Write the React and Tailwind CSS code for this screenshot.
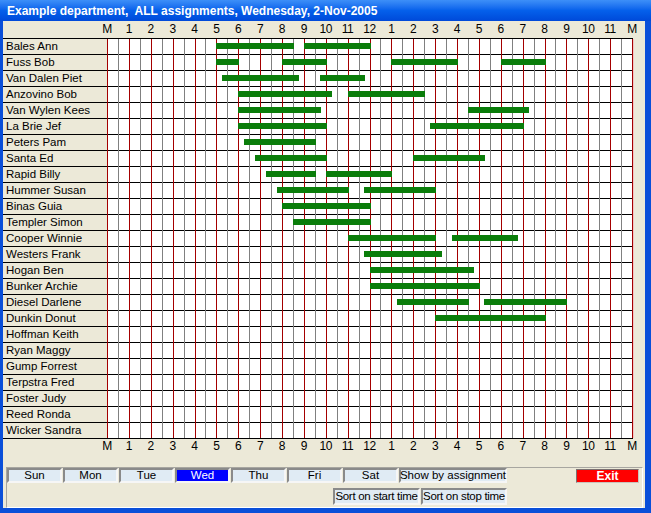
import React from 'react';

const HOUR = 21.875;

const people = [
    ['Bales Ann', [[5, 8.5], [9, 12]]],
    ['Fuss Bob', [[5, 6], [8, 10], [13, 16], [18, 20]]],
    ['Van Dalen Piet', [[5.25, 8.75], [9.75, 11.75]]],
    ['Anzovino Bob', [[6, 10.25], [11, 14.5]]],
    ['Van Wylen Kees', [[6, 9.75], [16.5, 19.25]]],
    ['La Brie Jef', [[6, 10], [14.75, 19]]],
    ['Peters Pam', [[6.25, 9.5]]],
    ['Santa Ed', [[6.75, 10], [14, 17.25]]],
    ['Rapid Billy', [[7.25, 9.5], [10, 13]]],
    ['Hummer Susan', [[7.75, 11], [11.75, 15]]],
    ['Binas Guia', [[8, 12]]],
    ['Templer Simon', [[8.5, 12]]],
    ['Cooper Winnie', [[11, 15], [15.75, 18.75]]],
    ['Westers Frank', [[11.75, 15.25]]],
    ['Hogan Ben', [[12, 16.75]]],
    ['Bunker Archie', [[12, 17]]],
    ['Diesel Darlene', [[13.25, 16.5], [17.25, 21]]],
    ['Dunkin Donut', [[15, 20]]],
    ['Hoffman Keith', []],
    ['Ryan Maggy', []],
    ['Gump Forrest', []],
    ['Terpstra Fred', []],
    ['Foster Judy', []],
    ['Reed Ronda', []],
    ['Wicker Sandra', []]
];

const hourLabels = ['M', '1', '2', '3', '4', '5', '6', '7', '8', '9', '10', '11', '12',
    '1', '2', '3', '4', '5', '6', '7', '8', '9', '10', '11', 'M'];

const days = ['Sun', 'Mon', 'Tue', 'Wed', 'Thu', 'Fri', 'Sat'];

const sunken = 'border-2 border-t-[#8a8a8a] border-l-[#8a8a8a] border-b-[#f6f6f6] border-r-[#f6f6f6]';

function HourRow() {
    return (
        <div className="flex h-[15px] items-center pl-[93px] text-[12px] leading-[15px] text-black">
            {hourLabels.map((h, i) => (
                <span key={i} className="w-[21.875px] shrink-0 text-center tracking-[-0.5px]">{h}</span>
            ))}
        </div>
    );
}

function GridLines() {
    // half-hour lines, red on the hour
    const lines = [];
    for (let i = 0; i <= 48; i++) {
        const x = Math.round(i * HOUR / 2) + 0.5;
        lines.push(
            <line key={i} x1={x} y1={0} x2={x} y2={399}
                stroke={i % 2 === 0 ? '#a40000' : '#808080'} strokeWidth={1} />
        );
    }
    return (
        <svg className="absolute left-[104px] top-0 z-[1] pointer-events-none" width={527} height={399} shapeRendering="crispEdges">
            {lines}
            <line x1={526.5} y1={0} x2={526.5} y2={399} stroke="#f2c4c4" strokeWidth={1} />
        </svg>
    );
}

export default function App() {
    return (
        <div
            className="w-[651px] h-[513px] flex flex-col bg-[#0a4fd9] overflow-hidden"
            style={{ fontFamily: '"Liberation Sans", Arial, sans-serif' }}
        >
            {/* Title bar */}
            <div className="h-[21px] shrink-0 flex items-center pl-[7px] bg-gradient-to-b from-[#3d8ff8] via-[#0560eb] to-[#0049d9]">
                <span className="text-white font-bold text-[12px] leading-none whitespace-pre">
                    Example department,  ALL assignments, Wednesday, 2-Nov-2005
                </span>
            </div>

            {/* Window body */}
            <div className="flex-1 ml-[3px] mr-[6px] mb-[5px] bg-[#ece9d8] flex flex-col">
                <div className="h-[17px] flex items-center">
                    <HourRow />
                </div>

                {/* Schedule grid */}
                <div className="relative w-[630px] border-t border-black">
                    <GridLines />
                    {people.map(([name, bars]) => (
                        <div key={name} className="flex h-[16px] border-b border-black">
                            <div className="w-[104px] shrink-0 pl-[3px] text-[11.5px] leading-[15px] text-black whitespace-nowrap">
                                {name}
                            </div>
                            <div className="relative w-[526px] bg-white">
                                {bars.map(([s, e], i) => {
                                    const left = Math.round(s * HOUR);
                                    const width = Math.round(e * HOUR) - left + 1;
                                    return (
                                        <div
                                            key={i}
                                            className="absolute top-[4px] z-[2] h-[6px] bg-[#0a7d0a]"
                                            style={{ left, width }}
                                        />
                                    );
                                })}
                            </div>
                        </div>
                    ))}
                </div>

                <HourRow />

                {/* Button panel */}
                <div className="mt-[13px] ml-[3px] mr-[2px] h-[41px] border-t border-l border-[#a7a6a0] border-b border-b-white border-r border-r-white flex">
                    <div className="w-[500px] flex flex-col">
                        <div className="flex gap-[1px] h-[15px]">
                            {days.map((d) => (
                                <div
                                    key={d}
                                    className={`w-[55px] flex items-center justify-center text-[11.5px] leading-none ${sunken} ${
                                        d === 'Wed' ? 'bg-[#0000ff] text-white' : 'bg-[#e0ebf4] text-black'
                                    }`}
                                >
                                    {d}
                                </div>
                            ))}
                            <div className={`w-[108px] flex items-center justify-center text-[11.5px] leading-none bg-[#e0ebf4] text-black whitespace-nowrap ${sunken}`}>
                                Show by assignment
                            </div>
                        </div>
                        <div className="flex justify-end gap-[1px] mt-[5px] h-[17px]">
                            <div className={`w-[87px] flex items-center justify-center text-[11.5px] leading-none tracking-[-0.3px] bg-[#e0ebf4] text-black whitespace-nowrap ${sunken}`}>
                                Sort on start time
                            </div>
                            <div className={`w-[86px] flex items-center justify-center text-[11.5px] leading-none tracking-[-0.3px] bg-[#e0ebf4] text-black whitespace-nowrap ${sunken}`}>
                                Sort on stop time
                            </div>
                        </div>
                    </div>
                    <div className="ml-[69px] mt-[1px] w-[63px] h-[14px] bg-[#ff0000] border border-t-[#7a6f6f] border-l-[#7a6f6f] border-b-[#c9c4bc] border-r-[#c9c4bc] flex items-center justify-center text-white font-bold text-[12px] leading-none">
                        Exit
                    </div>
                </div>
            </div>
        </div>
    );
}
